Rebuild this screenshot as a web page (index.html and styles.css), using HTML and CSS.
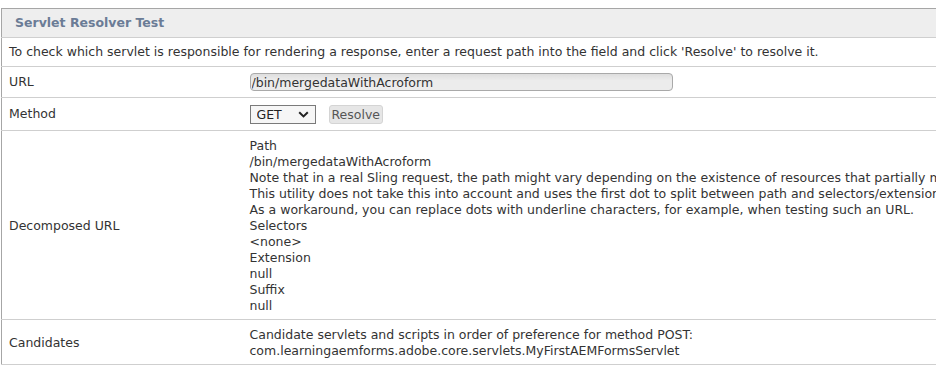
FILE: index.html
```html
<!DOCTYPE html>
<html lang="en">

<head>
    <meta charset="UTF-8">
    <meta name="viewport" content="width=device-width, initial-scale=1.0">
    <title>Servlet Resolver Test</title>
    <link rel="stylesheet" href="styles.css">
</head>

<body>

    <table class="content">
        <colgroup>
            <col class="col-label">
            <col class="col-value">
        </colgroup>
        <tr>
            <th class="title" colspan="2">Servlet Resolver Test</th>
        </tr>
        <tr>
            <td colspan="2">To check which servlet is responsible for rendering a response, enter a request path into the field and click 'Resolve' to resolve it.</td>
        </tr>
        <tr>
            <td>URL</td>
            <td><input type="text" class="url-input" value="/bin/mergedataWithAcroform"></td>
        </tr>
        <tr>
            <td>Method</td>
            <td>
                <div class="method">
                    <span class="select-box">
                        <select class="method-select">
                            <option>GET</option>
                            <option>POST</option>
                        </select>
                        <svg class="chevron" width="11" height="7" viewBox="0 0 11 7">
                            <path d="M1.2 1.2 L5.5 5.4 L9.8 1.2" fill="none" stroke="#222" stroke-width="2"/>
                        </svg>
                    </span>
                    <button class="resolve" type="submit">Resolve</button>
                </div>
            </td>
        </tr>
        <tr class="tall">
            <td>Decomposed URL</td>
            <td>
                <dl class="decomposed">
                    <dt>Path</dt>
                    <dd>/bin/mergedataWithAcroform<br>
                        Note that in a real Sling request, the path might vary depending on the existence of resources that partially match it.<br>
                        This utility does not take this into account and uses the first dot to split between path and selectors/extension.<br>
                        As a workaround, you can replace dots with underline characters, for example, when testing such an URL.</dd>
                    <dt>Selectors</dt>
                    <dd>&lt;none&gt;</dd>
                    <dt>Extension</dt>
                    <dd>null</dd>
                    <dt>Suffix</dt>
                    <dd>null</dd>
                </dl>
            </td>
        </tr>
        <tr class="tall">
            <td>Candidates</td>
            <td>Candidate servlets and scripts in order of preference for method POST:<br>
                com.learningaemforms.adobe.core.servlets.MyFirstAEMFormsServlet</td>
        </tr>
    </table>

</body>

</html>
```

FILE: styles.css
```css
body {
    margin: 8px 0 0 1px;
    background: #ffffff;
    color: #333333;
    font-family: "DejaVu Sans", Verdana, sans-serif;
    font-size: 12.5px;
    line-height: 16px;
    overflow: hidden;
}

.content {
    width: 1200px;
    table-layout: fixed;
    border-collapse: collapse;
    border-top: 1px solid #a6a6a6;
    border-left: 1px solid #a6a6a6;
    white-space: nowrap;
}

.col-label {
    width: 241px;
}

.content th,
.content td {
    padding: 6px 7px;
    text-align: left;
    vertical-align: middle;
    border-bottom: 1px solid #cfcfcf;
    overflow: hidden;
}

.content .tall td {
    padding-top: 7px;
    padding-bottom: 5px;
}

.title {
    background: #eeeeee;
    color: #6b7c96;
    font-weight: bold;
    padding-left: 13px !important;
}

.url-input {
    display: block;
    box-sizing: border-box;
    width: 423px;
    height: 18px;
    margin: 0;
    padding: 0 2px 0 1px;
    border: 1px solid #a9a9a9;
    border-radius: 4px;
    background: linear-gradient(#dedede, #ececec 40%, #ececec);
    color: #333333;
    font-family: inherit;
    font-size: 12.5px;
}

.method {
    display: flex;
    align-items: center;
    gap: 13px;
    height: 20px;
}

.select-box {
    position: relative;
    display: inline-block;
}

.method-select {
    appearance: none;
    -webkit-appearance: none;
    box-sizing: border-box;
    width: 66px;
    height: 19px;
    margin: 0;
    padding: 0 0 0 6px;
    border: 1px solid #7a7a7a;
    border-radius: 0;
    background: #f6f6f6;
    color: #222222;
    font-family: inherit;
    font-size: 12.5px;
}

.chevron {
    position: absolute;
    right: 7px;
    top: 6px;
    pointer-events: none;
}

.resolve {
    box-sizing: border-box;
    height: 19px;
    margin: 0;
    padding: 0 2px;
    border: 1px solid #d4d4d4;
    border-radius: 3px;
    background: #e6e6e6;
    color: #555555;
    font-family: inherit;
    font-size: 12.5px;
    cursor: pointer;
}

.decomposed {
    margin: 0;
}

.decomposed dt {
    font-weight: normal;
}

.decomposed dd {
    margin: 0;
}
```
